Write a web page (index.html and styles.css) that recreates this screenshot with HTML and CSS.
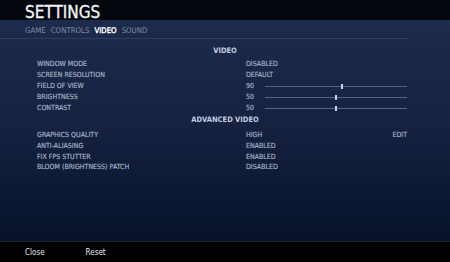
FILE: index.html
```html
<!DOCTYPE html>
<html>
<head>
<meta charset="utf-8">
<link rel="stylesheet" href="styles.css">
</head>
<body>
<div class="screen">
  <header class="top">
    <h1 class="title">SETTINGS</h1>
  </header>
  <main class="panel">
    <nav class="tabs">
      <span class="tab">GAME</span>
      <span class="tab">CONTROLS</span>
      <span class="tab active">VIDEO</span>
      <span class="tab">SOUND</span>
    </nav>
    <div class="rule"></div>
    <section class="section">
      <h2 class="section-title">VIDEO</h2>
      <div class="grid">
        <div class="label">WINDOW MODE</div><div class="value wide">DISABLED</div>
        <div class="label">SCREEN RESOLUTION</div><div class="value wide">DEFAULT</div>
        <div class="label">FIELD OF VIEW</div><div class="value">90</div><div class="slider"><div class="track"></div><div class="thumb" style="left: 53.5%"></div></div>
        <div class="label">BRIGHTNESS</div><div class="value">50</div><div class="slider"><div class="track"></div><div class="thumb" style="left: 49.3%"></div></div>
        <div class="label">CONTRAST</div><div class="value">50</div><div class="slider"><div class="track"></div><div class="thumb" style="left: 49.3%"></div></div>
      </div>
    </section>
    <section class="section">
      <h2 class="section-title adv">ADVANCED VIDEO</h2>
      <div class="grid adv-grid">
        <div class="label">GRAPHICS QUALITY</div><div class="value wide split"><span>HIGH</span><span>EDIT</span></div>
        <div class="label">ANTI-ALIASING</div><div class="value wide">ENABLED</div>
        <div class="label">FIX FPS STUTTER</div><div class="value wide">ENABLED</div>
        <div class="label">BLOOM (BRIGHTNESS) PATCH</div><div class="value wide">DISABLED</div>
      </div>
    </section>
  </main>
  <footer class="bottom">
    <span class="btn">Close</span>
    <span class="btn">Reset</span>
  </footer>
</div>
</body>
</html>
```
FILE: styles.css
```css
html, body {
  margin: 0;
  padding: 0;
  background: #000;
}
.screen {
  width: 450px;
  height: 262px;
  display: flex;
  flex-direction: column;
  overflow: hidden;
  font-family: "DejaVu Sans Condensed", "DejaVu Sans", sans-serif;
  font-stretch: condensed;
}
.top {
  height: 20px;
  background: #04080e;
  padding-left: 25px;
  box-sizing: border-box;
}
.title {
  margin: 0;
  font-size: 17px;
  line-height: 24px;
  font-weight: normal;
  color: #f2f4f8;
  -webkit-text-stroke: 0.3px #f2f4f8;
}
.panel {
  height: 221px;
  background: linear-gradient(to bottom, #1d2b4c 0%, #15213f 50%, #07122a 100%);
  display: flex;
  flex-direction: column;
}
.tabs {
  display: flex;
  gap: 5px;
  padding-left: 25px;
  padding-top: 5px;
  height: 12px;
  align-items: center;
}
.tab {
  font-size: 7.8px;
  color: #7d8ca8;
  line-height: 12px;
}
.tab.active {
  color: #ffffff;
  -webkit-text-stroke: 0.35px #ffffff;
}
.rule {
  margin-top: 1px;
  width: 408px;
  height: 1px;
  background: #2e3e63;
}
.section-title {
  margin: 0;
  text-align: center;
  font-size: 7.5px;
  font-weight: bold;
  color: #c4cde0;
  line-height: 11px;
  padding-top: 6px;
}
.section-title.adv {
  padding-top: 0;
}
.grid {
  display: grid;
  grid-template-columns: 209px 19px 142px;
  grid-auto-rows: 11px;
  padding-left: 37px;
  padding-top: 3px;
}
.adv-grid {
  padding-top: 5px;
  grid-auto-rows: 10.8px;
}
.label, .value {
  font-size: 7px;
  line-height: 11px;
  color: #aab6cc;
  white-space: nowrap;
  -webkit-text-stroke: 0.15px #aab6cc;
}
.value {
  color: #a5b1c8;
}
.value.wide {
  grid-column: 2 / 4;
}
.value.split {
  display: flex;
  justify-content: space-between;
}
.slider {
  position: relative;
  height: 11px;
}
.track {
  position: absolute;
  left: 0;
  right: 0;
  top: 5px;
  height: 1px;
  background: #55658a;
}
.thumb {
  position: absolute;
  top: 3px;
  width: 2px;
  height: 5px;
  background: #c8d2e6;
}
.bottom {
  flex: 1;
  background: #000;
  border-top: 1px solid #1c2029;
  display: flex;
  align-items: center;
  padding-left: 25px;
  gap: 41px;
}
.btn {
  font-size: 8px;
  color: #e8eaee;
}
```
